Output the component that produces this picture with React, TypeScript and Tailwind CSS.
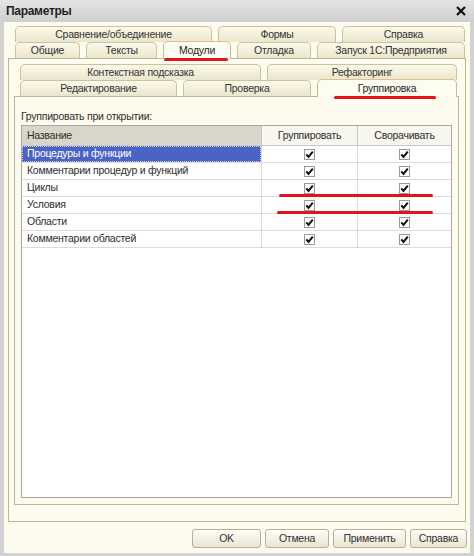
import React from 'react'

type TabProps = {
  label: string
  className: string
  selected?: boolean
  mark?: string
}

function Tab({ label, className, selected, mark }: TabProps) {
  return (
    <div
      className={`relative flex items-center justify-center rounded-t-[5px] border border-b-0 leading-none ${
        selected
          ? 'z-10 -mt-px -mb-px h-[18px] border-[#c4bd9c] border-t-[#d9c387] bg-[#fdfcf1] text-[#1f1f1f]'
          : 'h-[16px] border-[#c9c3a4] bg-gradient-to-b from-[#fbf9ea] to-[#ebe6cd] text-[#333333]'
      } ${className}`}
    >
      {label}
      {mark && <span className={`absolute bottom-[-2px] h-[3px] rounded-full bg-[#e3121c] ${mark}`} />}
    </div>
  )
}

function Check() {
  return (
    <span className="flex h-[11px] w-[11px] items-center justify-center border border-[#9a9a96] bg-white">
      <svg width="9" height="9" viewBox="0 0 9 9">
        <path d="M1.3 4.4 L3.5 6.9 L7.8 1.6" fill="none" stroke="#111" strokeWidth="2" />
      </svg>
    </span>
  )
}

const ROWS = [
  'Процедуры и функции',
  'Комментарии процедур и функций',
  'Циклы',
  'Условия',
  'Области',
  'Комментарии областей',
]

export default function App() {
  return (
    <div className="flex h-[556px] w-[474px] flex-col bg-[#d2d2d2] font-['Liberation_Sans',Arial,sans-serif] text-[10.5px] tracking-[-0.25px] text-[#2e2e2e]">
      {/* Title bar */}
      <div className="flex h-[22px] items-center justify-between bg-gradient-to-b from-[#e4e4e4] to-[#cfcfcf] pl-[6px] pr-[8px]">
        <span className="text-[12px] font-bold tracking-[-0.3px] text-[#1e1e1e]">Параметры</span>
        <svg width="10" height="10" viewBox="0 0 10 10">
          <path d="M1 1 L9 9 M9 1 L1 9" stroke="#111" strokeWidth="2.2" />
        </svg>
      </div>

      <div className="mx-[4px] mb-[3px] flex flex-1 flex-col bg-[#fcfbed]">
        {/* Outer tabs */}
        <div className="flex flex-col pl-[11px] pt-[4px]">
          <div className="flex gap-[6px]">
            <Tab label="Сравнение/объединение" className="w-[197px]" />
            <Tab label="Формы" className="w-[118px]" />
            <Tab label="Справка" className="w-[123px]" />
          </div>
          <div className="flex gap-[6px]">
            <Tab label="Общие" className="w-[65px]" />
            <Tab label="Тексты" className="w-[71px]" />
            <Tab label="Модули" className="w-[68px]" selected mark="left-0 w-[64px]" />
            <Tab label="Отладка" className="w-[74px]" />
            <Tab label="Запуск 1С:Предприятия" className="w-[148px]" />
          </div>
        </div>

        {/* Outer panel */}
        <div className="mx-[4px] flex flex-1 flex-col border border-[#bdb699] bg-[#fcfbed] pt-[5px]">
          <div className="flex flex-col pl-[11px]">
            <div className="flex gap-[6px]">
              <Tab label="Контекстная подсказка" className="w-[241px]" />
              <Tab label="Рефакторинг" className="w-[190px]" />
            </div>
            <div className="flex gap-[6px]">
              <Tab label="Редактирование" className="w-[157px]" />
              <Tab label="Проверка" className="w-[128px]" />
              <Tab label="Группировка" className="w-[140px]" selected mark="left-[16px] w-[102px]" />
            </div>
          </div>

          {/* Inner panel */}
          <div className="mb-[16px] ml-[5px] mr-[6px] flex flex-1 flex-col border border-[#bdb699] bg-[#fcfbed] px-[6px] pb-[6px] pt-[12px]">
            <div className="h-[14px] leading-[14px]">Группировать при открытии:</div>
            <div className="relative mt-[2px] flex flex-1 flex-col border border-[#a9a8a0] bg-white">
              <div className="flex h-[20px] border-b border-[#c9c9c4]">
                <div className="flex w-[240px] items-center border-r border-[#c9c9c4] bg-[#d8d5c9] pl-[5px]">Название</div>
                <div className="flex w-[96px] items-center justify-center border-r border-[#c9c9c4] bg-[#f7f6ef]">Группировать</div>
                <div className="flex flex-1 items-center justify-center bg-[#f7f6ef]">Сворачивать</div>
              </div>
              {ROWS.map((name, i) => (
                <div key={name} className="flex h-[17px] border-b border-[#dcdcd8]">
                  <div className="flex w-[240px] border-r border-[#dcdcd8]">
                    {i === 0 ? (
                      <div className="flex flex-1 items-center border border-dotted border-[#c9d0f3] bg-[#4b63c7] pl-[4px] text-white">{name}</div>
                    ) : (
                      <div className="flex flex-1 items-center pl-[5px]">{name}</div>
                    )}
                  </div>
                  <div className="flex w-[96px] items-center justify-center border-r border-[#dcdcd8]">
                    <Check />
                  </div>
                  <div className="flex flex-1 items-center justify-center">
                    <Check />
                  </div>
                </div>
              ))}
              <span className="absolute left-[257px] top-[68px] h-[3px] w-[154px] rounded-full bg-[#e3121c]" />
              <span className="absolute left-[255px] top-[85px] h-[3px] w-[156px] rounded-full bg-[#e3121c]" />
            </div>
          </div>
        </div>

        {/* Buttons */}
        <div className="flex h-[31px] items-center justify-end gap-[4px] pr-[3px] pt-[2px]">
          {[
            ['OK', 'w-[69px]'],
            ['Отмена', 'w-[64px]'],
            ['Применить', 'w-[73px]'],
            ['Справка', 'w-[57px]'],
          ].map(([t, w]) => (
            <div
              key={t}
              className={`flex h-[19px] items-center justify-center rounded-[3px] border border-[#b5af97] bg-gradient-to-b from-[#fefdf7] to-[#e9e5d2] text-[#333333] ${w}`}
            >
              {t}
            </div>
          ))}
        </div>
      </div>
    </div>
  )
}
